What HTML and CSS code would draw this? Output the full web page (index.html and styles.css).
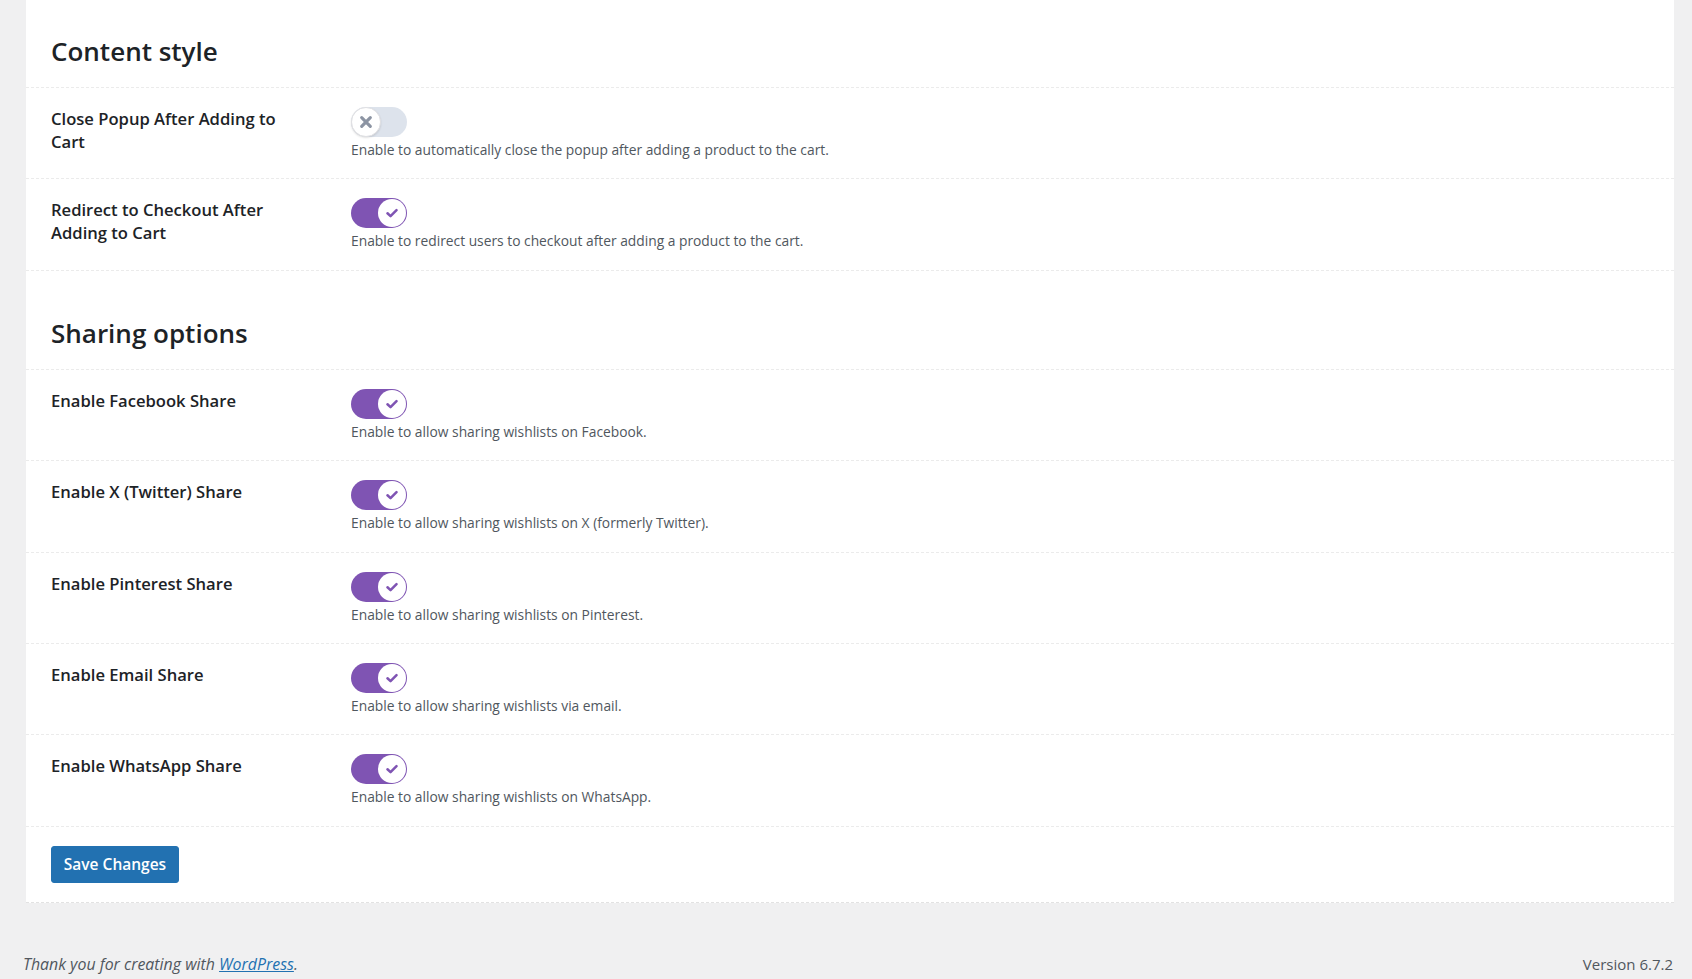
FILE: index.html
```html
<!DOCTYPE html>
<html lang="en">
<head>
<meta charset="utf-8">
<title>Settings</title>
<link rel="stylesheet" href="styles.css">
</head>
<body>
<div class="wrap">
  <form class="card">
    <h2 class="section-title first">Content style</h2>
    <div class="row">
      <div class="label">Close Popup After Adding to Cart</div>
      <div class="field">
        <span class="toggle off"><span class="knob"><svg viewBox="0 0 12 12" width="14" height="14"><path d="M2.3 2.3L9.7 9.7M9.7 2.3L2.3 9.7" stroke="#8c94a3" stroke-width="2.7" stroke-linecap="round" fill="none"/></svg></span></span>
        <p class="desc">Enable to automatically close the popup after adding a product to the cart.</p>
      </div>
    </div>
    <div class="row">
      <div class="label">Redirect to Checkout After Adding to Cart</div>
      <div class="field">
        <span class="toggle on"><span class="knob"><svg viewBox="0 0 12 12" width="16" height="16"><path d="M2.6 6.2L4.9 8.3L9.4 3.8" stroke="#7f54b3" stroke-width="1.9" stroke-linecap="round" stroke-linejoin="round" fill="none"/></svg></span></span>
        <p class="desc">Enable to redirect users to checkout after adding a product to the cart.</p>
      </div>
    </div>

    <h2 class="section-title">Sharing options</h2>
    <div class="row">
      <div class="label">Enable Facebook Share</div>
      <div class="field">
        <span class="toggle on"><span class="knob"><svg viewBox="0 0 12 12" width="16" height="16"><path d="M2.6 6.2L4.9 8.3L9.4 3.8" stroke="#7f54b3" stroke-width="1.9" stroke-linecap="round" stroke-linejoin="round" fill="none"/></svg></span></span>
        <p class="desc">Enable to allow sharing wishlists on Facebook.</p>
      </div>
    </div>
    <div class="row">
      <div class="label">Enable X (Twitter) Share</div>
      <div class="field">
        <span class="toggle on"><span class="knob"><svg viewBox="0 0 12 12" width="16" height="16"><path d="M2.6 6.2L4.9 8.3L9.4 3.8" stroke="#7f54b3" stroke-width="1.9" stroke-linecap="round" stroke-linejoin="round" fill="none"/></svg></span></span>
        <p class="desc">Enable to allow sharing wishlists on X (formerly Twitter).</p>
      </div>
    </div>
    <div class="row">
      <div class="label">Enable Pinterest Share</div>
      <div class="field">
        <span class="toggle on"><span class="knob"><svg viewBox="0 0 12 12" width="16" height="16"><path d="M2.6 6.2L4.9 8.3L9.4 3.8" stroke="#7f54b3" stroke-width="1.9" stroke-linecap="round" stroke-linejoin="round" fill="none"/></svg></span></span>
        <p class="desc">Enable to allow sharing wishlists on Pinterest.</p>
      </div>
    </div>
    <div class="row">
      <div class="label">Enable Email Share</div>
      <div class="field">
        <span class="toggle on"><span class="knob"><svg viewBox="0 0 12 12" width="16" height="16"><path d="M2.6 6.2L4.9 8.3L9.4 3.8" stroke="#7f54b3" stroke-width="1.9" stroke-linecap="round" stroke-linejoin="round" fill="none"/></svg></span></span>
        <p class="desc">Enable to allow sharing wishlists via email.</p>
      </div>
    </div>
    <div class="row">
      <div class="label">Enable WhatsApp Share</div>
      <div class="field">
        <span class="toggle on"><span class="knob"><svg viewBox="0 0 12 12" width="16" height="16"><path d="M2.6 6.2L4.9 8.3L9.4 3.8" stroke="#7f54b3" stroke-width="1.9" stroke-linecap="round" stroke-linejoin="round" fill="none"/></svg></span></span>
        <p class="desc">Enable to allow sharing wishlists on WhatsApp.</p>
      </div>
    </div>
    <div class="submit">
      <button type="button" class="button-primary">Save Changes</button>
    </div>
  </form>
</div>
<footer class="footer">
  <span class="thanks">Thank you for creating with <a href="#">WordPress</a>.</span>
  <span class="version">Version 6.7.2</span>
</footer>
</body>
</html>
```
FILE: styles.css
```css
html, body {
  margin: 0;
  padding: 0;
}
body {
  background: #f0f0f1;
  font-family: "Open Sans", "Noto Sans", "Liberation Sans", sans-serif;
  color: #1d2327;
  height: 979px;
  overflow: hidden;
}
.wrap {
  margin: 0 18px 0 26px;
}
.card {
  display: block;
  background: #fff;
  border-bottom: 1px dashed #e2e2e2;
}
.section-title {
  margin: 0;
  padding: 45px 25px 19px;
  font-size: 26px;
  line-height: 34px;
  font-weight: 600;
  color: #1d2327;
  border-bottom: 1px dashed #ebebeb;
}
.section-title.first {
  padding-top: 34px;
}
.row {
  display: grid;
  grid-template-columns: 300px 1fr;
  padding: 19px 25px 18.4px;
  border-bottom: 1px dashed #ebebeb;
}
.label {
  max-width: 245px;
  font-size: 16.6px;
  line-height: 23px;
  font-weight: 600;
  color: #1d2327;
}
.field {
  display: flex;
  flex-direction: column;
  align-items: flex-start;
}
.toggle {
  position: relative;
  display: block;
  width: 56px;
  height: 30px;
  border-radius: 15px;
}
.toggle.on {
  background: #7f54b3;
}
.toggle.off {
  background: #dde3ec;
}
.knob {
  position: absolute;
  top: 1px;
  width: 28px;
  height: 28px;
  border-radius: 50%;
  background: #fff;
  display: flex;
  align-items: center;
  justify-content: center;
}
.toggle.on .knob {
  right: 1px;
}
.toggle.off .knob {
  left: 0;
  top: 0;
  width: 28px;
  height: 28px;
  border: 1px solid #e0e0e3;
  box-shadow: 0 1px 2px rgba(0, 0, 0, 0.12);
}
.desc {
  margin: 3px 0 0;
  font-size: 13.8px;
  line-height: 20px;
  color: #50575e;
}
.submit {
  padding: 19px 25px 19px;
}
.button-primary {
  display: block;
  width: 128px;
  height: 37px;
  padding: 0;
  background: #2271b1;
  border: 1px solid #2271b1;
  border-radius: 3px;
  color: #fff;
  font-family: inherit;
  font-size: 15.5px;
  font-weight: 600;
  cursor: pointer;
}
.footer {
  display: flex;
  justify-content: space-between;
  align-items: baseline;
  padding: 51px 19px 0 23px;
  font-size: 15px;
  line-height: 20px;
  color: #50575e;
}
.thanks {
  font-style: italic;
  font-size: 15.9px;
}
.thanks a {
  color: #2271b1;
}
```
